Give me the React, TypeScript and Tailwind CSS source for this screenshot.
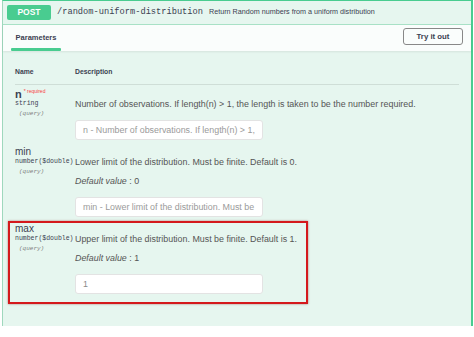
const mono = "font-['Liberation_Mono',monospace]"

interface Param {
  name: string
  required?: boolean
  type: string
  desc: string
  def?: string
  placeholder: string
  value?: string
}

const params: Param[] = [
  {
    name: 'n',
    required: true,
    type: 'string',
    desc: 'Number of observations. If length(n) > 1, the length is taken to be the number required.',
    placeholder: 'n - Number of observations. If length(n) > 1, the length is taken to be the number required.',
  },
  {
    name: 'min',
    type: 'number($double)',
    desc: 'Lower limit of the distribution. Must be finite. Default is 0.',
    def: '0',
    placeholder: 'min - Lower limit of the distribution. Must be finite. Default is 0.',
  },
  {
    name: 'max',
    type: 'number($double)',
    desc: 'Upper limit of the distribution. Must be finite. Default is 1.',
    def: '1',
    placeholder: 'max - Upper limit of the distribution. Must be finite. Default is 1.',
    value: '1',
  },
]

function ParamRow({ p }: { p: Param }) {
  return (
    <div className="flex">
      {/* name column */}
      <div className="w-[60px] shrink-0">
        {p.required ? (
          <div className="h-[10px] flex items-center leading-none">
            <span className="text-[11px] font-bold text-[#3b4151]">{p.name}</span>
            <span className="text-[5px] text-[#f93e3e] ml-[2px] mb-[5px]">* required</span>
          </div>
        ) : (
          <div className="h-[11px] flex items-center text-[10px] leading-none text-[#3b4151]">{p.name}</div>
        )}
        <div className={`${mono} text-[6.5px] leading-[10px] text-[#3b4151] whitespace-nowrap`}>{p.type}</div>
        <div className={`${mono} italic text-[6px] leading-[10px] text-[#808080] pl-[4px]`}>(query)</div>
      </div>
      {/* description column */}
      <div className={`flex-1 ${p.required ? 'pt-[8px]' : 'pt-[9px]'}`}>
        <p className="text-[8.9px] leading-[14px] text-[#555]">{p.desc}</p>
        {p.def && (
          <p className="text-[8.9px] leading-[14px] mt-[5px] text-[#555]">
            <i>Default value</i> : {p.def}
          </p>
        )}
        <input
          readOnly
          placeholder={p.placeholder}
          defaultValue={p.value}
          className="mt-[9px] block w-[188px] h-[20px] bg-white border border-[#e3e3e3] rounded-[3px] px-[7px] text-[8.9px] text-[#8a8a8a] placeholder:text-[#9a9a9a] outline-none font-['Liberation_Sans',Arial,sans-serif]"
        />
      </div>
    </div>
  )
}

export default function App() {
  return (
    <div className="w-[474px] h-[337px] bg-white overflow-hidden relative font-['Liberation_Sans',Arial,sans-serif]">
      <div className="ml-[2px] w-[471px] h-[326px] border-t border-[#49cc90] border-l border-l-[#9fd8bd] border-r-2 border-r-[#49cc90] bg-[#e6f6ef] flex flex-col">
        {/* summary header */}
        <div className="h-[24px] shrink-0 flex items-center pl-[4px] border-b border-[#a9e2c7]">
          <div className="w-[44px] h-[15px] bg-[#49cc90] rounded-[2px] flex items-center justify-center text-white font-bold text-[8.5px]">
            POST
          </div>
          <span className={`${mono} text-[8.7px] text-[#3b4151] ml-[6px]`}>/random-uniform-distribution</span>
          <span className="text-[7.2px] text-[#3b4151] ml-[6px]">Return Random numbers from a uniform distribution</span>
        </div>

        {/* tab bar */}
        <div className="h-[26px] shrink-0 bg-white/80 flex items-end justify-between pl-[8px] pr-[8px] shadow-[0_1px_2px_rgba(0,0,0,0.08)]">
          <div className="w-[50px] h-full flex flex-col justify-end">
            <div className="flex-1 flex items-center justify-center text-[7.5px] font-bold text-[#3b4151] pt-[2px]">Parameters</div>
            <div className="h-[3px] bg-[#49cc90] rounded-[1px]" />
          </div>
          <div className="self-center mt-[-3px] w-[60px] h-[17px] border-[1.5px] border-[#888] rounded-[3px] flex items-center justify-center text-[7.8px] font-bold text-[#3b4151]">
            Try it out
          </div>
        </div>

        {/* parameter table */}
        <div className="flex-1 px-[12px] pt-[16px]">
          <div className="flex text-[6.8px] leading-[10px] font-bold text-[#3b4151] pb-[7px] border-b border-[#cfded7]">
            <div className="w-[60px]">Name</div>
            <div>Description</div>
          </div>
          <div className="flex flex-col gap-[6px] pt-[4px]">
            {params.map(p => (
              <ParamRow key={p.name} p={p} />
            ))}
          </div>
        </div>
      </div>

      {/* red annotation box around max */}
      <div className="absolute left-[8px] top-[221px] w-[300px] h-[83px] border-2 border-[#d4191c] shadow-[0_0_2px_rgba(120,0,0,0.5)]" />
    </div>
  )
}
